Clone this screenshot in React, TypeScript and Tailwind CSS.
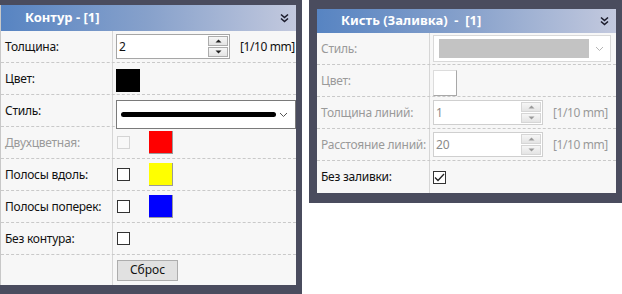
// Two property panels (outline + fill) on a dark frame, in a WinForms-like style.
const FONT = { fontFamily: '"Noto Sans", "Open Sans", sans-serif' };

const Chevrons = () => (
  <svg width="9" height="10" viewBox="0 0 9 10" className="text-[#1b1b2b]">
    <path d="M1 1.5 L4.5 4.5 L8 1.5" fill="none" stroke="currentColor" strokeWidth="1.6" />
    <path d="M1 5.5 L4.5 8.5 L8 5.5" fill="none" stroke="currentColor" strokeWidth="1.6" />
  </svg>
);

const Header = ({ title, pl }: { title: string; pl: string }) => (
  <div
    className={`flex h-full items-center justify-between bg-gradient-to-r from-[#5784c2] via-[#87a1cb] to-[#c3c9de] pr-[7px] ${pl}`}
  >
    <span className="whitespace-pre text-[13px] font-bold text-white">{title}</span>
    <Chevrons />
  </div>
);

const Row = ({
  label,
  labelW,
  muted,
  last,
  h = 'h-[32px]',
  children,
}: {
  label: string;
  labelW: string;
  muted?: boolean;
  last?: boolean;
  h?: string;
  children?: React.ReactNode;
}) => (
  <div className={`flex ${h} shrink-0 ${last ? '' : 'border-b border-dashed border-[#c9c9c9]'}`}>
    <div
      className={`flex ${labelW} shrink-0 items-center overflow-hidden whitespace-nowrap border-r border-[#d6d6d6] pl-[4px] text-[12px] tracking-[-0.25px] ${
        muted ? 'text-[#9a9a9a]' : 'text-[#111]'
      }`}
    >
      {label}
    </div>
    <div className="flex flex-1 items-center pl-[3px]">{children}</div>
  </div>
);

const Spinner = ({ value, disabled, w }: { value: string; disabled?: boolean; w: string }) => (
  <div
    className={`flex h-[25px] ${w} shrink-0 items-stretch border bg-white ${
      disabled ? 'border-[#cfcfcf] text-[#8a8a8a]' : 'border-[#a6a6a6] text-[#111]'
    }`}
  >
    <div className="flex flex-1 items-center pl-[2px] text-[12px]">{value}</div>
    <div className="flex w-[21px] flex-col gap-[1px] py-[1px] pr-[1px]">
      {['up', 'down'].map((d) => (
        <div
          key={d}
          className={`flex flex-1 items-center justify-center border bg-gradient-to-b from-[#f6f6f6] to-[#e4e4e4] ${
            disabled ? 'border-[#d6d6d6]' : 'border-[#acacac]'
          }`}
        >
          <svg width="7" height="4" viewBox="0 0 7 4">
            <path
              d={d === 'up' ? 'M0.5 3.5 L3.5 0.5 L6.5 3.5 Z' : 'M0.5 0.5 L3.5 3.5 L6.5 0.5 Z'}
              fill={disabled ? '#9a9a9a' : '#222'}
            />
          </svg>
        </div>
      ))}
    </div>
  </div>
);

const Check = ({ checked, disabled }: { checked?: boolean; disabled?: boolean }) => (
  <div
    className={`flex h-[13px] w-[13px] shrink-0 items-center justify-center border ${
      disabled ? 'border-[#d4d4d4] bg-[#f8f8f8]' : 'border-[#333] bg-white'
    }`}
  >
    {checked && (
      <svg width="11" height="9" viewBox="0 0 11 9">
        <path d="M1 4.5 L4 7.5 L10 1" fill="none" stroke="#222" strokeWidth="1.3" />
      </svg>
    )}
  </div>
);

const Swatch = ({ color }: { color: string }) => (
  <div className={`h-[23px] w-[24px] border-b border-r border-[#9a9a9a] ${color}`} />
);

const Chevron = ({ color }: { color: string }) => (
  <svg width="9" height="6" viewBox="0 0 9 6">
    <path d="M1 1 L4.5 4.5 L8 1" fill="none" stroke={color} strokeWidth="1" />
  </svg>
);

const Unit = ({ muted }: { muted?: boolean }) => (
  <span
    className={`ml-[10px] shrink-0 whitespace-nowrap text-[12px] tracking-[-0.4px] ${
      muted ? 'text-[#9a9a9a]' : 'text-[#111]'
    }`}
  >
    [1/10 mm]
  </span>
);

export default function App() {
  return (
    <div className="flex h-[294px] w-[622px] items-start bg-white" style={FONT}>
      {/* Outline panel */}
      <div className="h-[294px] w-[302px] shrink-0 bg-[#4a4c5e] pb-[9px] pr-[6px] pt-[5px]">
        <div className="flex h-full flex-col border-l border-[#c8c8c8] bg-[#f7f7f7]">
          <div className="h-[26px] shrink-0">
            <Header title="Контур - [1]" pl="pl-[24px]" />
          </div>
          <Row label="Толщина:" labelW="w-[112px]">
            <Spinner value="2" w="w-[114px]" />
            <Unit />
          </Row>
          <Row label="Цвет:" labelW="w-[112px]">
            <div className="mt-[4px] h-[23px] w-[24px] bg-black" />
          </Row>
          <Row label="Стиль:" labelW="w-[112px]">
            <div className="mt-[8px] flex h-[29px] w-[180px] items-center border border-[#7a7a7a] bg-white pl-[4px] pr-[7px]">
              <div className="h-[5px] w-[155px] rounded-full bg-black" />
              <div className="ml-auto">
                <Chevron color="#555" />
              </div>
            </div>
          </Row>
          <Row label="Двухцветная:" labelW="w-[112px]" muted>
            <div className="flex items-center gap-[19px] pl-[1px]">
              <Check disabled />
              <Swatch color="bg-[#ff0000]" />
            </div>
          </Row>
          <Row label="Полосы вдоль:" labelW="w-[112px]">
            <div className="flex items-center gap-[19px] pl-[1px]">
              <Check />
              <Swatch color="bg-[#ffff00]" />
            </div>
          </Row>
          <Row label="Полосы поперек:" labelW="w-[112px]">
            <div className="flex items-center gap-[19px] pl-[1px]">
              <Check />
              <Swatch color="bg-[#0000ff]" />
            </div>
          </Row>
          <Row label="Без контура:" labelW="w-[112px]">
            <div className="pl-[1px]">
              <Check />
            </div>
          </Row>
          <Row label="" labelW="w-[112px]" last h="flex-1">
            <button
              type="button"
              className="ml-[1px] h-[21px] w-[61px] border border-[#adadad] bg-[#e1e1e1] text-[12px] text-[#111]"
            >
              Сброс
            </button>
          </Row>
        </div>
      </div>

      {/* Fill panel */}
      <div className="ml-[7px] h-[203px] flex-1 bg-[#4a4c5e] pb-[10px] pl-[8px] pr-[6px] pt-[9px]">
        <div className="flex h-full flex-col bg-[#f7f7f7]">
          <div className="h-[24px] shrink-0">
            <Header title="Кисть (Заливка)  -  [1]" pl="pl-[24px]" />
          </div>
          <Row label="Стиль:" labelW="w-[113px]" muted>
            <div className="flex h-[27px] w-[178px] items-center border border-[#d9d9d9] bg-white pl-[5px] pr-[6px]">
              <div className="h-[19px] w-[150px] bg-[#c3c3c3]" />
              <div className="ml-auto">
                <Chevron color="#b5b5b5" />
              </div>
            </div>
          </Row>
          <Row label="Цвет:" labelW="w-[113px]" muted>
            <div className="mt-[5px] h-[26px] w-[24px] border border-b-[#a8a8a8] border-l-[#dcdcdc] border-r-[#a8a8a8] border-t-[#dcdcdc] bg-white" />
          </Row>
          <Row label="Толщина линий:" labelW="w-[113px]" muted>
            <Spinner value="1" w="w-[110px]" disabled />
            <Unit muted />
          </Row>
          <Row label="Расстояние линий:" labelW="w-[113px]" muted>
            <Spinner value="20" w="w-[110px]" disabled />
            <Unit muted />
          </Row>
          <Row label="Без заливки:" labelW="w-[113px]" last h="flex-1">
            <Check checked />
          </Row>
        </div>
      </div>
    </div>
  );
}
